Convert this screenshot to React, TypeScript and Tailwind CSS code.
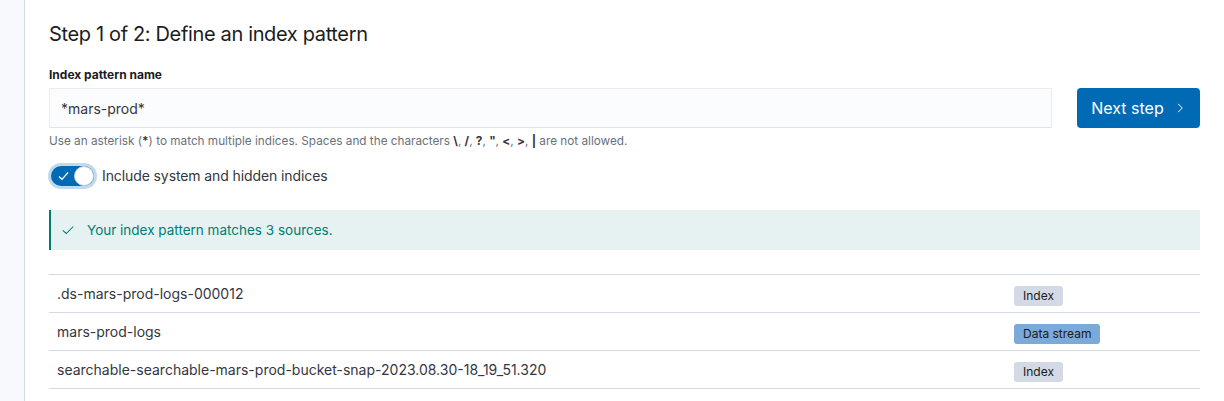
import React from "react";

const rows = [
  { name: ".ds-mars-prod-logs-000012", type: "Index" },
  { name: "mars-prod-logs", type: "Data stream" },
  { name: "searchable-searchable-mars-prod-bucket-snap-2023.08.30-18_19_51.320", type: "Index" },
];

export default function App() {
  return (
    <div
      className="flex h-[401px] w-[1224px] overflow-hidden bg-white text-[#343741]"
      style={{ fontFamily: "Inter, 'Noto Sans', sans-serif" }}
    >
      <div className="w-[25px] shrink-0 border-r border-[#d3dae6] bg-[#f7f9fc]" />
      <div className="flex-1 pl-[24px] pr-[24px] pt-[22px]">
        <h1 className="text-[20px] leading-[24px] font-normal tracking-[-0.35px] text-[#1a1c21]">
          Step 1 of 2: Define an index pattern
        </h1>
        <div className="mt-[21px] text-[12px] leading-[16px] font-bold text-[#1a1c21]">
          Index pattern name
        </div>
        <div className="mt-[5px] flex items-start gap-[25px]">
          <div className="flex-1">
            <div className="flex h-[40px] items-center border border-[#e9edf3] border-b-[#dfe3ea] bg-[#fbfcfd] px-[11px] text-[14px] text-[#343741]">
              *mars-prod*
            </div>
            <div className="mt-[5px] text-[11.75px] leading-[16px] text-[#69707d]">
              Use an asterisk (<strong className="text-[#343741]">*</strong>) to match multiple indices. Spaces and the characters{" "}
              <strong className="text-[#343741]">\</strong>, <strong className="text-[#343741]">/</strong>,{" "}
              <strong className="text-[#343741]">?</strong>, <strong className="text-[#343741]">"</strong>,{" "}
              <strong className="text-[#343741]">&lt;</strong>, <strong className="text-[#343741]">&gt;</strong>,{" "}
              <strong className="text-[#343741]">|</strong> are not allowed.
            </div>
          </div>
          <button className="flex h-[40px] w-[123px] items-center justify-center gap-[10px] rounded-[4px] bg-[#006bb4] text-[16px] font-normal text-white">
            <span>Next step</span>
            <svg width="12" height="12" viewBox="0 0 16 16" fill="none" stroke="currentColor" strokeWidth="1.3">
              <path d="M5.5 2.5 L11 8 L5.5 13.5" />
            </svg>
          </button>
        </div>
        <div className="mt-[16px] flex items-center gap-[8px]">
          <div className="relative ml-[2px] h-[20px] w-[43px] rounded-full bg-[#006bb4] ring-[3px] ring-[#006bb4]/25">
            <svg className="absolute left-[7px] top-[5px]" width="11" height="10" viewBox="0 0 11 10" fill="none" stroke="white" strokeWidth="1.2">
              <path d="M1 5.5 L4 8.3 L10 1.5" />
            </svg>
            <div className="absolute right-0 top-0 h-[20px] w-[20px] rounded-full border border-[#c8ced8] bg-white" />
          </div>
          <span className="text-[14px] tracking-[-0.1px] text-[#343741]">Include system and hidden indices</span>
        </div>
        <div className="mt-[24px] flex h-[40px] items-center border-l-2 border-[#017d73] bg-[#e6f1f1] pl-[10px] text-[13.5px] text-[#017d73]">
          <svg width="14" height="14" viewBox="0 0 16 16" fill="none" stroke="currentColor" strokeWidth="1.2">
            <path d="M2 8.5 L6 12 L14 4" />
          </svg>
          <span className="ml-[12px]">Your index pattern matches 3 sources.</span>
        </div>
        <div className="mt-[24px] border-t border-[#d3dae6]">
          {rows.map((r) => (
            <div key={r.name} className="grid h-[38px] grid-cols-[1fr_194px] items-center border-b border-[#d3dae6]">
              <div className="pl-[8px] text-[14px] text-[#343741]">{r.name}</div>
              <div className="pl-[8px]">
                <span
                  className={
                    "inline-flex h-[20px] items-center rounded-[3px] px-[9px] text-[12px] text-[#1a1c21] " +
                    (r.type === "Index" ? "bg-[#d3dae6]" : "bg-[#79aad9]")
                  }
                >
                  {r.type}
                </span>
              </div>
            </div>
          ))}
        </div>
      </div>
    </div>
  );
}
